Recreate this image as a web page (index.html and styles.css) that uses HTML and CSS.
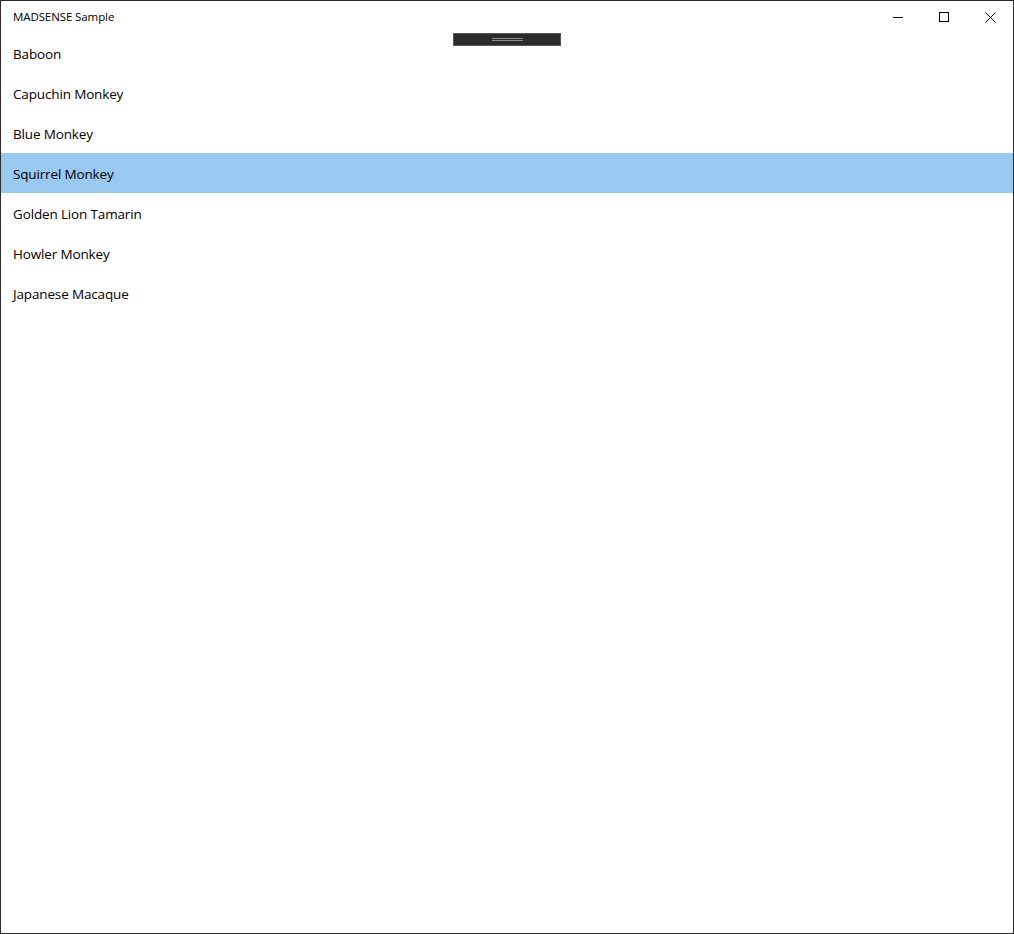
FILE: index.html
```html
<!DOCTYPE html>
<html lang="en">
<head>
<meta charset="utf-8">
<title>MADSENSE Sample</title>
<link rel="stylesheet" href="styles.css">
</head>
<body>
<div class="window">
  <div class="titlebar">
    <div class="title">MADSENSE Sample</div>
    <div class="controls">
      <div class="ctl">
        <svg width="10" height="10" viewBox="0 0 10 10"><path d="M0 5.5H10" stroke="#000" stroke-width="1"/></svg>
      </div>
      <div class="ctl">
        <svg width="10" height="10" viewBox="0 0 10 10"><rect x="0.5" y="0.5" width="9" height="9" fill="none" stroke="#000" stroke-width="1"/></svg>
      </div>
      <div class="ctl">
        <svg width="11" height="11" viewBox="0 0 11 11"><path d="M0.5 0.5L10.5 10.5M10.5 0.5L0.5 10.5" stroke="#000" stroke-width="1"/></svg>
      </div>
    </div>
  </div>
  <ul class="list">
    <li class="item">Baboon</li>
    <li class="item">Capuchin Monkey</li>
    <li class="item">Blue Monkey</li>
    <li class="item selected">Squirrel Monkey</li>
    <li class="item">Golden Lion Tamarin</li>
    <li class="item">Howler Monkey</li>
    <li class="item">Japanese Macaque</li>
  </ul>
  <div class="debug-bar"><span class="grip"></span></div>
</div>
</body>
</html>
```
FILE: styles.css
```css
html, body {
  margin: 0;
  padding: 0;
  background: #fff;
}
.window {
  position: relative;
  box-sizing: border-box;
  width: 1014px;
  height: 934px;
  border: 1px solid #2b2b2b;
  background: #fff;
  font-family: "Segoe UI", "Open Sans", "Noto Sans", sans-serif;
  color: #000;
  display: flex;
  flex-direction: column;
}
.titlebar {
  height: 32px;
  display: flex;
  align-items: center;
  justify-content: space-between;
}
.title {
  padding-left: 12px;
  font-size: 11.5px;
  letter-spacing: -0.1px;
  line-height: 32px;
}
.controls {
  display: flex;
  height: 32px;
}
.ctl {
  width: 46px;
  height: 32px;
  display: flex;
  align-items: center;
  justify-content: center;
}
.ctl svg {
  display: block;
}
.list {
  list-style: none;
  margin: 0;
  padding: 0;
}
.item {
  box-sizing: border-box;
  height: 40px;
  padding-top: 2px;
  line-height: 38px;
  padding-left: 12px;
  font-size: 13.5px;
  letter-spacing: -0.15px;
}
.item.selected {
  background: #99c9ef;
}
.debug-bar {
  position: absolute;
  top: 32px;
  left: 452px;
  width: 108px;
  height: 13px;
  box-sizing: border-box;
  background: #2b2b2b;
  border: 1px solid #575757;
  display: flex;
  align-items: center;
  justify-content: center;
}
.grip {
  display: block;
  width: 31px;
  height: 3px;
  border-top: 1px solid #8a8a8a;
  border-bottom: 1px solid #8a8a8a;
  box-sizing: border-box;
}
```
